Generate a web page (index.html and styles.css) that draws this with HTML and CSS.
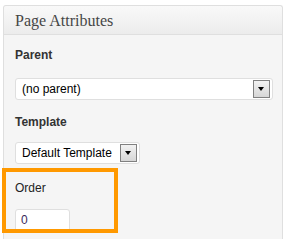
FILE: index.html
```html
<!DOCTYPE html>
<html lang="en">
<head>
    <meta charset="UTF-8">
    <title>Page Attributes</title>
    <link rel="stylesheet" href="styles.css">
</head>
<body>

<div class="postbox">
    <h3 class="hndle">Page Attributes</h3>
    <div class="inside">
        <p class="label first">Parent</p>
        <div class="select wide">
            <span>(no parent)</span>
            <span class="arrow"></span>
        </div>

        <p class="label">Template</p>
        <div class="select narrow">
            <span>Default Template</span>
            <span class="arrow"></span>
        </div>

        <p class="label order">Order</p>
        <div class="text-input">0</div>
    </div>
    <div class="highlight"></div>
</div>

</body>
</html>
```

FILE: styles.css
```css
body {
    background-color: #fff;
    margin: 0;
    padding: 0;
    font-family: "Liberation Sans", Arial, sans-serif;
    color: #333;
}

.postbox {
    position: relative;
    margin: 5px 0 0 3px;
    width: 278px;
    height: 240px;
    background-color: #f5f5f5;
    border: 1px solid #dfdfdf;
    border-bottom: none;
    border-radius: 3px 3px 0 0;
}

.hndle {
    margin: 0;
    height: 28px;
    padding-left: 11px;
    font-family: "Liberation Serif", Georgia, serif;
    font-size: 16px;
    font-weight: normal;
    line-height: 30px;
    color: #464646;
    background: linear-gradient(#f9f9f9, #ececec);
    border-bottom: 1px solid #dfdfdf;
    border-radius: 3px 3px 0 0;
}

.inside {
    padding: 0 11px;
}

.label {
    margin: 14px 0 0;
    font-size: 12px;
    font-weight: bold;
    line-height: 16px;
    color: #333;
}

.label.first {
    margin-top: 12px;
}

.label.order {
    margin-top: 16px;
    font-weight: normal;
    color: #222;
}

.select {
    display: flex;
    align-items: center;
    justify-content: space-between;
    box-sizing: border-box;
    height: 22px;
    margin-top: 15px;
    padding: 0 2px 0 6px;
    background-color: #fff;
    border: 1px solid #dfdfdf;
    border-radius: 3px;
    font-size: 12px;
    color: #000;
}

.select.wide {
    width: 258px;
}

.select.narrow {
    width: 125px;
    margin-top: 12px;
}

.arrow {
    position: relative;
    box-sizing: border-box;
    width: 17px;
    height: 18px;
    border: 1px solid #808080;
    background: linear-gradient(#f2f2f2, #d6d6d6);
}

.arrow::after {
    content: "";
    position: absolute;
    left: 4px;
    top: 6px;
    border-left: 3.5px solid transparent;
    border-right: 3.5px solid transparent;
    border-top: 4px solid #000;
}

.text-input {
    box-sizing: border-box;
    width: 55px;
    height: 23px;
    margin-top: 13px;
    padding-left: 5px;
    background-color: #fff;
    border: 1px solid #dfdfdf;
    border-radius: 3px;
    font-size: 12px;
    line-height: 21px;
    color: #3b2a5a;
}

.highlight {
    position: absolute;
    left: -2px;
    top: 162px;
    width: 108px;
    height: 57px;
    border: 4px solid #f90;
}
```
